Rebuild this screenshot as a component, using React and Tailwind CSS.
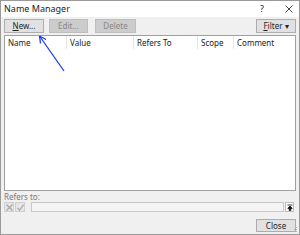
import React from 'react'

const font = { fontFamily: '"Noto Sans", "Open Sans", sans-serif' }

function Btn({ children, disabled, className = '' }) {
  return (
    <div
      className={`h-[13px] flex items-center justify-center border text-[8px] leading-none ${
        disabled ? 'bg-[#cccccc] border-[#bfbfbf] text-[#888888]' : 'bg-[#e1e1e1] border-[#adadad] text-[#222222]'
      } ${className}`}
    >
      {children}
    </div>
  )
}

export default function App() {
  const cols = [
    { label: 'Name', w: 'w-[62px]' },
    { label: 'Value', w: 'w-[67px]' },
    { label: 'Refers To', w: 'w-[64px]' },
    { label: 'Scope', w: 'w-[36px]' },
    { label: 'Comment', w: 'flex-1' },
  ]

  return (
    <div className="relative w-[300px] h-[235px] bg-[#f0f0f0] border border-[#9a9a9a] flex flex-col overflow-hidden" style={font}>
      {/* title bar */}
      <div className="h-[16px] bg-white flex items-center pl-[3px] pr-[6px] text-[9px] text-[#222222] shrink-0">
        <span className="flex-1">Name Manager</span>
        <span className="mr-[21px] text-[9px]">?</span>
        <svg width="8" height="8" viewBox="0 0 8 8" className="mb-[1px]">
          <path d="M0.5 0.5 L7.5 7.5 M7.5 0.5 L0.5 7.5" stroke="#333" strokeWidth="0.9" />
        </svg>
      </div>

      <div className="flex-1 flex flex-col px-[3px]">
        {/* toolbar */}
        <div className="flex items-center mt-[2px]">
          <Btn className="w-[40px] h-[14px]">
            <span><span className="underline">N</span>ew...</span>
          </Btn>
          <Btn disabled className="w-[39px] h-[14px] ml-[5px]">Edit...</Btn>
          <Btn disabled className="w-[41px] h-[14px] ml-[7px]">Delete</Btn>
          <div className="flex-1" />
          <Btn className="w-[40px] h-[14px]">
            <span><span className="underline">F</span>ilter ▾</span>
          </Btn>
        </div>

        {/* list */}
        <div className="mt-[2px] h-[156px] bg-white border border-[#a0a0a0]">
          <div className="flex h-[13px] items-center text-[8px] text-[#222222]">
            {cols.map((c, i) => (
              <div
                key={c.label}
                className={`${c.w} h-full flex items-center pl-[3px] ${i < cols.length - 1 ? 'border-r border-[#e5e5e5]' : ''}`}
              >
                {c.label}
              </div>
            ))}
          </div>
        </div>

        {/* refers to */}
        <div className="mt-[1px] text-[8px] leading-[10px] text-[#7a7a7a]">Refers to:</div>
        <div className="flex items-center h-[10px]">
          <div className="w-[10px] h-[10px] bg-[#e6e6e6] border border-[#cfcfcf] flex items-center justify-center">
            <svg width="7" height="7" viewBox="0 0 7 7">
              <path d="M0.5 0.5 L6.5 6.5 M6.5 0.5 L0.5 6.5" stroke="#a8a8a8" strokeWidth="1.2" />
            </svg>
          </div>
          <div className="w-[10px] h-[10px] ml-[1px] bg-[#e6e6e6] border border-[#cfcfcf] flex items-center justify-center">
            <svg width="7" height="7" viewBox="0 0 7 7">
              <path d="M0.5 3.8 L2.6 6 L6.5 0.8" stroke="#a8a8a8" strokeWidth="1.2" fill="none" />
            </svg>
          </div>
          <div className="ml-[6px] flex-1 h-[10px] bg-[#f4f4f4] border border-[#c8c8c8]" />
          <div className="w-[9px] h-[10px] ml-[1px] mr-[2px] bg-[#fbfbfb] border border-[#bcbcbc] flex items-center justify-center">
            <svg width="6" height="7" viewBox="0 0 6 7">
              <path d="M0.5 1 H5.5 M3 2 L0.8 4.4 H2.2 V6.5 H3.8 V4.4 H5.2 Z" stroke="#111" strokeWidth="0.8" fill="#111" />
            </svg>
          </div>
        </div>

        <div className="flex justify-end mt-[7px]">
          <Btn className="w-[40px]">Close</Btn>
        </div>
      </div>

      {/* resize grip */}
      <svg className="absolute right-[1px] bottom-[1px]" width="6" height="6" viewBox="0 0 6 6">
        <rect x="4" y="0" width="1" height="1" fill="#b0b0b0" />
        <rect x="2" y="2" width="1" height="1" fill="#b0b0b0" />
        <rect x="4" y="2" width="1" height="1" fill="#b0b0b0" />
        <rect x="0" y="4" width="1" height="1" fill="#b0b0b0" />
        <rect x="2" y="4" width="1" height="1" fill="#b0b0b0" />
        <rect x="4" y="4" width="1" height="1" fill="#b0b0b0" />
      </svg>

      {/* annotation arrow */}
      <svg className="absolute left-0 top-0 pointer-events-none" width="300" height="235" viewBox="0 0 300 235">
        <path d="M63 70 L38.5 35" stroke="#1d3cf0" strokeWidth="1.3" fill="none" />
        <path d="M38.5 35 L39.5 42.5 M38.5 35 L45 38.5" stroke="#1d3cf0" strokeWidth="1.3" fill="none" />
      </svg>
    </div>
  )
}
